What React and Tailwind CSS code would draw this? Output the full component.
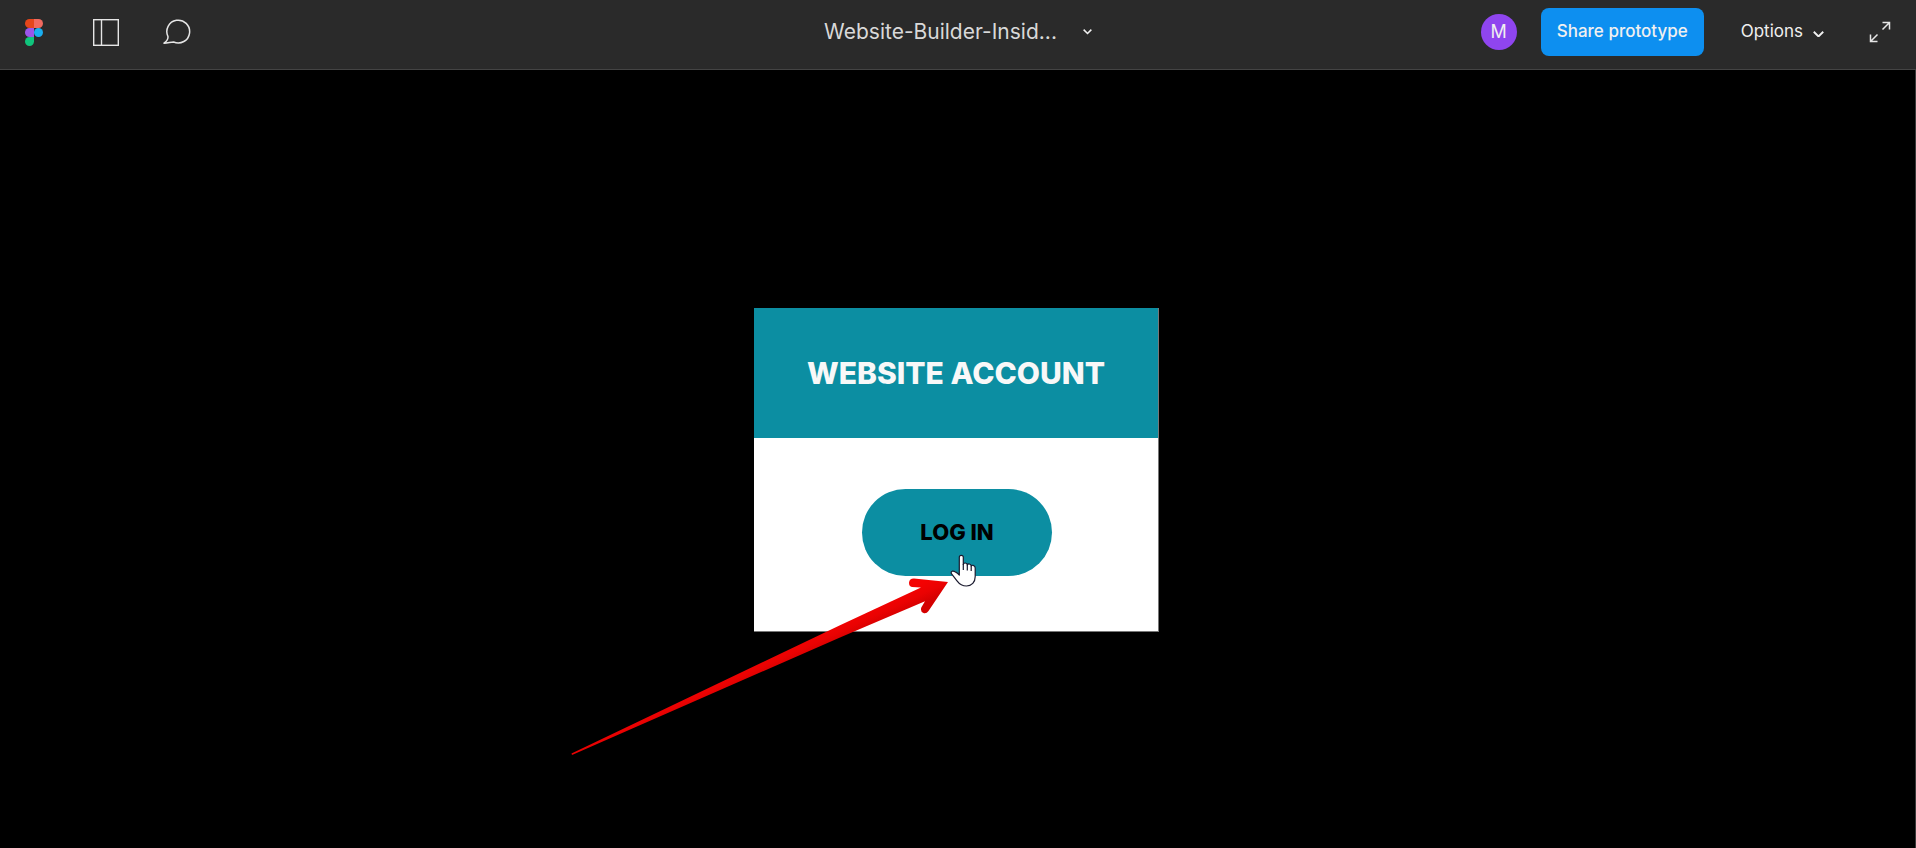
import React from 'react'


const FigmaLogo = () => (
  <svg width="18" height="27" viewBox="0 0 18 27" aria-hidden="true">
    <path d="M4.5 0H9v9H4.5a4.5 4.5 0 0 1 0-9z" fill="#e5461b" />
    <path d="M9 0h4.500a4.500 4.500 0 0 1 0 9H9z" fill="#f0695f" />
    <path d="M4.500 9H9v9H4.500a4.500 4.500 0 0 1 0-9z" fill="#9a55ea" />
    <circle cx="13.500" cy="13.500" r="4.500" fill="#1aaef0" />
    <path d="M4.500 18H9v4.500a4.500 4.500 0 1 1-4.500-4.500z" fill="#10c47c" />
  </svg>
)

const PanelIcon = () => (
  <svg width="26" height="27" viewBox="0 0 26 27" fill="none" stroke="#e6e6e6" aria-hidden="true">
    <rect x="0.700" y="0.700" width="24.600" height="25.600" strokeWidth="1.400" />
    <path d="M8.500 1v25" strokeWidth="1.400" />
  </svg>
)

const CommentIcon = () => (
  <svg width="28" height="26" viewBox="0 0 28 26" fill="none" stroke="#e6e6e6" strokeWidth="1.500" aria-hidden="true">
    <path d="M1 24.200C3.500 22.500 5.200 20.300 5 17.600A11.400 11.400 0 1 1 10.600 23C8 22.900 4.500 24.300 1 24.200z" strokeLinejoin="round" />
  </svg>
)

const ExpandIcon = () => (
  <svg width="22" height="22" viewBox="0 0 22 22" fill="none" stroke="#e6e6e6" strokeWidth="1.500" aria-hidden="true">
    <path d="M13.500 1.500h7v7M20.500 1.500l-7 7M1.500 13.500v7h7M1.500 20.500l7-7" />
  </svg>
)

const Chevron = ({ className }) => (
  <svg viewBox="0 0 10 6" fill="none" stroke="#f0f0f0" strokeWidth="1.700" className={className} aria-hidden="true">
    <path d="M0.700 0.700L5 5l4.300-4.300" />
  </svg>
)

const Arrow = () => (
  <svg width="384" height="190" viewBox="0 0 384 190" className="pointer-events-none absolute top-[262px] -left-[184px] max-w-none" aria-hidden="true">
    <defs>
      <linearGradient id="arrowRed" gradientUnits="userSpaceOnUse" x1="320" y1="28" x2="328" y2="45.500">
        <stop offset="0" stopColor="#f40202" />
        <stop offset="0.500" stopColor="#ea0202" />
        <stop offset="1" stopColor="#d40000" />
      </linearGradient>
    </defs>
    <path
      d="M1.500 183.500L270 55.300L351 17.600L342 17Q339 16.500 339 12.700Q339.500 8.500 344 8.600L378 12L358.500 41Q356.500 43.800 353.500 43Q350 41.500 351.300 37.500L355 31.200L270 67.500L2 185z"
      fill="url(#arrowRed)"
    />
  </svg>
)

const HandCursor = () => (
  <svg width="26" height="33" viewBox="0 0 26 33" className="pointer-events-none absolute top-[246px] left-[196px]" aria-hidden="true">
    <path
      d="M9.300 19V3.200Q9.300 1.300 11.300 1.300Q13.300 1.300 13.300 3.200V10.500Q13.500 8.900 15.300 9Q17.200 9.200 17.300 11Q17.600 9.800 19.300 10Q21.100 10.300 21.200 12Q21.700 11 23.200 11.300Q25.200 11.800 25.200 14V22.500C25.200 28.300 21.700 32 16.500 32C12.500 32 9.500 30.200 7 26.800L1.400 19.700Q0.700 17.700 2.200 17.200C4.700 16.600 6.500 18.200 9.300 21z"
      fill="#fff" stroke="#1a1a2e" strokeWidth="1.200" strokeLinejoin="round"
    />
    <path d="M13.300 10v6M17.300 11v5.500M21.200 12v5" stroke="#1a1a2e" strokeWidth="1.200" />
  </svg>
)


const Toolbar = () => {
  return (
    <header className="flex h-[70px] items-center border-b border-[#444444] bg-[#2a2a2a] px-[25px] pb-[5px] text-[#f0f0f0]">
      <nav className="flex flex-1 items-center">
        <a href="#home" aria-label="Figma home"><FigmaLogo /></a>
        <button type="button" aria-label="Toggle sidebar" className="ml-[50px]"><PanelIcon /></button>
        <button type="button" aria-label="Comments" className="ml-[44px]"><CommentIcon /></button>
      </nav>

      <button type="button" className="flex items-center gap-[26px] text-[21px] leading-7 whitespace-nowrap text-[#d9d9d9]">
        Website-Builder-Insid...
        <Chevron className="w-[9px]" />
      </button>

      <div className="flex flex-1 items-center justify-end">
        <div className="flex size-9 items-center justify-center rounded-full bg-[#8f45ef] text-lg">M</div>
        <button type="button" className="ml-6 h-12 rounded-lg bg-[#0d8ff0] px-4 text-[17px] font-medium whitespace-nowrap">
          Share prototype
        </button>
        <button type="button" className="ml-[37px] flex items-center gap-[10px] text-[17px]">
          Options
          <Chevron className="mt-1 w-[11px]" />
        </button>
        <button type="button" aria-label="Full screen" className="ml-[45px]"><ExpandIcon /></button>
      </div>
    </header>
  )
}


const App = () => {
  return (
    <div className="flex min-h-screen flex-col bg-black font-['Inter',sans-serif]">
      <Toolbar />

      <main className="flex flex-1 items-center justify-center border-r border-[#3a3a3a] pt-[22px] pr-[2px]">
        <section className="relative w-[405px] border-r border-b border-[#777777] bg-white">
          <div className="flex h-[130px] items-center justify-center bg-[#0c8ea2]">
            <h1 className="text-[30px] font-extrabold whitespace-nowrap text-[#f8f8f8]">WEBSITE ACCOUNT</h1>
          </div>
          <div className="flex justify-center pt-[51px] pb-[55px] pl-[2px]">
            <button type="button" className="h-[87px] w-[190px] rounded-full bg-[#0c8ea2] text-[22px] font-extrabold text-black">
              LOG IN
            </button>
          </div>
          <HandCursor />
          <Arrow />
        </section>
      </main>
    </div>
  )
}

export default App
